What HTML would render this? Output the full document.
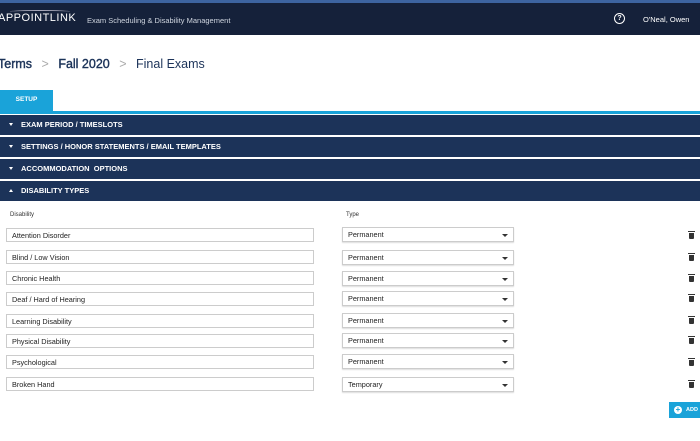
<!DOCTYPE html>
<html><head><style>
*{margin:0;padding:0;box-sizing:border-box}
body{width:700px;height:441px;overflow:hidden;background:#fff;font-family:"Liberation Sans",sans-serif;position:relative}
.a{position:absolute}
.top{left:0;top:0;width:700px;height:3px;background:#3d64a0}
.nav{left:0;top:3px;width:700px;height:32px;background:#15213a;color:#cfd5df}
.sec{left:0;width:700px;height:20px;background:#1c3359;color:#fff;font-size:7.5px;font-weight:bold;line-height:20px;padding-left:21px}
.sec i{position:absolute;left:9px;top:8px;width:0;height:0;border-left:2.5px solid transparent;border-right:2.5px solid transparent;border-top:3px solid #fff}
.sec i.up{border-top:0;border-bottom:3px solid #fff}
.inp{left:6px;width:308px;height:14px;border:1px solid #ccc;font-size:7.3px;line-height:13px;padding-left:5px;color:#222}
.sel{left:342px;width:172px;height:15px;border:1px solid #ccc;font-size:7.3px;line-height:14px;padding-left:5px;color:#222;box-shadow:0 1px 1px #ddd}
.sel b{position:absolute;right:5px;top:6px;border-left:3px solid transparent;border-right:3px solid transparent;border-top:3px solid #333}
.tr{left:689px;width:5px;height:6px;background:#333;border-radius:0 0 1px 1px}
.tr:before{content:"";position:absolute;left:-1px;top:-2px;width:7px;height:1px;background:#333}
</style></head><body>
<div class="a top"></div>
<div class="a nav">
<div class="a" style="left:-2px;top:9px;font-size:11px;letter-spacing:.5px;color:#fff">APPOINTLINK</div>
<div class="a" style="left:10px;top:7px;width:60px;height:3px;border-top:1px solid #aab;border-radius:50%"></div>
<div class="a" style="left:87px;top:13px;font-size:7.5px">Exam Scheduling &amp; Disability Management</div>
<div class="a" style="left:614px;top:10px;width:11px;height:11px;border:1.3px solid #fff;border-radius:50%;color:#fff;font-size:7px;font-weight:bold;text-align:center;line-height:9px">?</div>
<div class="a" style="left:643px;top:12px;font-size:7.5px;color:#fff">O'Neal, Owen</div>
</div>
<div class="a" style="left:-2px;top:57px;font-size:12.5px;color:#1c3359"><b style="font-weight:normal;-webkit-text-stroke:.4px #1c3359">Terms</b> <span style="color:#aaa;margin:0 6px">&gt;</span> <b style="font-weight:normal;-webkit-text-stroke:.4px #1c3359">Fall 2020</b> <span style="color:#aaa;margin:0 6px">&gt;</span> Final Exams</div>
<div class="a" style="left:0;top:90px;width:53px;height:22px;background:#1aa3d9;color:#fff;font-size:6.5px;font-weight:bold;text-align:center;line-height:20px">SETUP</div>
<div class="a" style="left:0;top:111px;width:700px;height:3px;background:#1aa3d9"></div>
<div class="a sec" style="top:115px"><i></i>EXAM PERIOD / TIMESLOTS</div>
<div class="a sec" style="top:137px"><i></i>SETTINGS / HONOR STATEMENTS / EMAIL TEMPLATES</div>
<div class="a sec" style="top:159px"><i></i>ACCOMMODATION&nbsp; OPTIONS</div>
<div class="a sec" style="top:181px"><i class="up"></i>DISABILITY TYPES</div>
<div class="a" style="left:10px;top:212px;font-size:6px;color:#333">Disability</div>
<div class="a" style="left:346px;top:212px;font-size:6px;color:#333">Type</div>

<div class="a inp" style="top:228px">Attention Disorder</div><div class="a sel" style="top:227px">Permanent<b></b></div><div class="a tr" style="top:233px"></div>
<div class="a inp" style="top:250px">Blind / Low Vision</div><div class="a sel" style="top:250px">Permanent<b></b></div><div class="a tr" style="top:255px"></div>
<div class="a inp" style="top:271px">Chronic Health</div><div class="a sel" style="top:271px">Permanent<b></b></div><div class="a tr" style="top:276px"></div>
<div class="a inp" style="top:292px">Deaf / Hard of Hearing</div><div class="a sel" style="top:291px">Permanent<b></b></div><div class="a tr" style="top:296px"></div>
<div class="a inp" style="top:314px">Learning Disability</div><div class="a sel" style="top:313px">Permanent<b></b></div><div class="a tr" style="top:318px"></div>
<div class="a inp" style="top:334px">Physical Disability</div><div class="a sel" style="top:333px">Permanent<b></b></div><div class="a tr" style="top:338px"></div>
<div class="a inp" style="top:355px">Psychological</div><div class="a sel" style="top:354px">Permanent<b></b></div><div class="a tr" style="top:360px"></div>
<div class="a inp" style="top:377px">Broken Hand</div><div class="a sel" style="top:377px">Temporary<b></b></div><div class="a tr" style="top:382px"></div>

<div class="a" style="left:669px;top:402px;width:31px;height:16px;background:#1aa3d9;color:#fff;font-size:5.5px;font-weight:bold;line-height:16px;padding-left:17px">ADD
<div class="a" style="left:5px;top:4px;width:8px;height:8px;border-radius:50%;background:#fff;color:#1aa3d9;font-size:8px;line-height:8px;text-align:center">+</div></div>
</body></html>
